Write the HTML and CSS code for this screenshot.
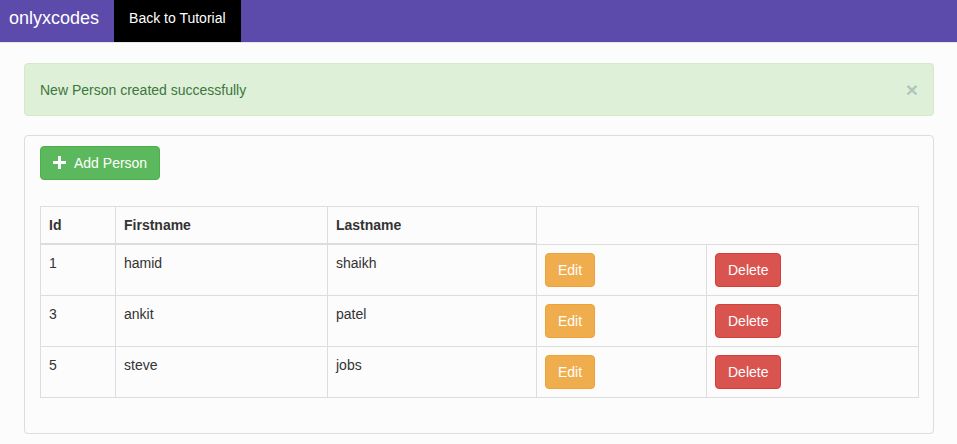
FILE: index.html
```html
<!DOCTYPE html>
<html lang="en">
<head>
<meta charset="utf-8">
<title>onlyxcodes</title>
<link rel="stylesheet" href="styles.css">
</head>
<body>
<nav class="navbar">
  <a class="brand" href="#">onlyxcodes</a>
  <a class="nav-link" href="#">Back to Tutorial</a>
</nav>

<main class="container">
  <div class="alert">
    <span>New Person created successfully</span>
    <button class="close" type="button">&times;</button>
  </div>

  <section class="panel">
    <div class="panel-heading">
      <a class="btn btn-success" href="#">
        <svg class="icon-plus" width="13" height="13" viewBox="0 0 13 13"><path d="M5 0h3v5h5v3H8v5H5V8H0V5h5z" fill="#fff"/></svg>
        Add Person
      </a>
    </div>
    <div class="panel-body">
      <table class="table">
        <colgroup>
          <col class="c-id"><col class="c-first"><col class="c-last"><col class="c-edit"><col class="c-del">
        </colgroup>
        <thead>
          <tr>
            <th>Id</th>
            <th>Firstname</th>
            <th>Lastname</th>
            <td colspan="2"></td>
          </tr>
        </thead>
        <tbody>
          <tr>
            <td>1</td><td>hamid</td><td>shaikh</td>
            <td><a class="btn btn-warning" href="#">Edit</a></td>
            <td><a class="btn btn-danger" href="#">Delete</a></td>
          </tr>
          <tr>
            <td>3</td><td>ankit</td><td>patel</td>
            <td><a class="btn btn-warning" href="#">Edit</a></td>
            <td><a class="btn btn-danger" href="#">Delete</a></td>
          </tr>
          <tr>
            <td>5</td><td>steve</td><td>jobs</td>
            <td><a class="btn btn-warning" href="#">Edit</a></td>
            <td><a class="btn btn-danger" href="#">Delete</a></td>
          </tr>
        </tbody>
      </table>
    </div>
  </section>
</main>
</body>
</html>
```

FILE: styles.css
```css
* { box-sizing: border-box; }

html, body {
  margin: 0;
  background: #fcfcfc;
  font-family: "Liberation Sans", Arial, sans-serif;
  font-size: 14px;
  line-height: 20px;
  color: #333;
}

a { text-decoration: none; }

/* top bar */
.navbar {
  display: flex;
  height: 43px;
  background: #5c4bab;
  border-bottom: 1px solid #e7e7e7;
}

.brand {
  display: flex;
  align-items: center;
  padding: 0 15px 7px 9px;
  font-size: 18px;
  color: #fff;
}

.nav-link {
  display: flex;
  align-items: center;
  padding: 0 15px 7px;
  height: 42px;
  background: #000;
  color: #fff;
}

/* page */
.container {
  padding: 20px 23px 0 24px;
}

.alert {
  display: flex;
  align-items: center;
  justify-content: space-between;
  padding: 15px 15px;
  margin-bottom: 19px;
  border: 1px solid #d6e9c6;
  border-radius: 4px;
  background: #dff0d8;
  color: #3c763d;
}

.close {
  padding: 0;
  margin-right: 0;
  border: 0;
  background: none;
  font-family: "Liberation Sans", Arial, sans-serif;
  font-size: 21px;
  font-weight: bold;
  line-height: 1;
  color: #1f4d6b;
  opacity: 0.25;
}

.panel {
  border: 1px solid #ddd;
  border-radius: 4px;
  box-shadow: 0 1px 1px rgba(0, 0, 0, 0.05);
}

.panel-heading {
  padding: 10px 15px;
  border-bottom: 1px solid transparent;
}

.panel-body {
  padding: 15px;
}

/* buttons */
.btn {
  display: inline-flex;
  align-items: center;
  height: 34px;
  padding: 6px 12px;
  border: 1px solid transparent;
  border-radius: 4px;
  color: #fff;
  font-size: 14px;
}

.btn-success { background: #5cb85c; border-color: #4cae4c; }
.btn-warning { background: #f0ad4e; border-color: #eea236; }
.btn-danger  { background: #d9534f; border-color: #d43f3a; }

.icon-plus { margin-right: 8px; margin-top: -1px; }

/* table */
.table {
  width: 878px;
  border-collapse: collapse;
  border: 1px solid #ddd;
  margin-bottom: 20px;
  table-layout: fixed;
}

.c-id { width: 75px; }
.c-first { width: 212px; }
.c-last { width: 209px; }
.c-edit { width: 170px; }
.c-del { width: 212px; }

.table th,
.table td {
  padding: 8px;
  border: 1px solid #ddd;
  text-align: left;
  vertical-align: top;
  line-height: 20px;
}

.table thead th {
  border-bottom-width: 2px;
  font-weight: bold;
}
```
